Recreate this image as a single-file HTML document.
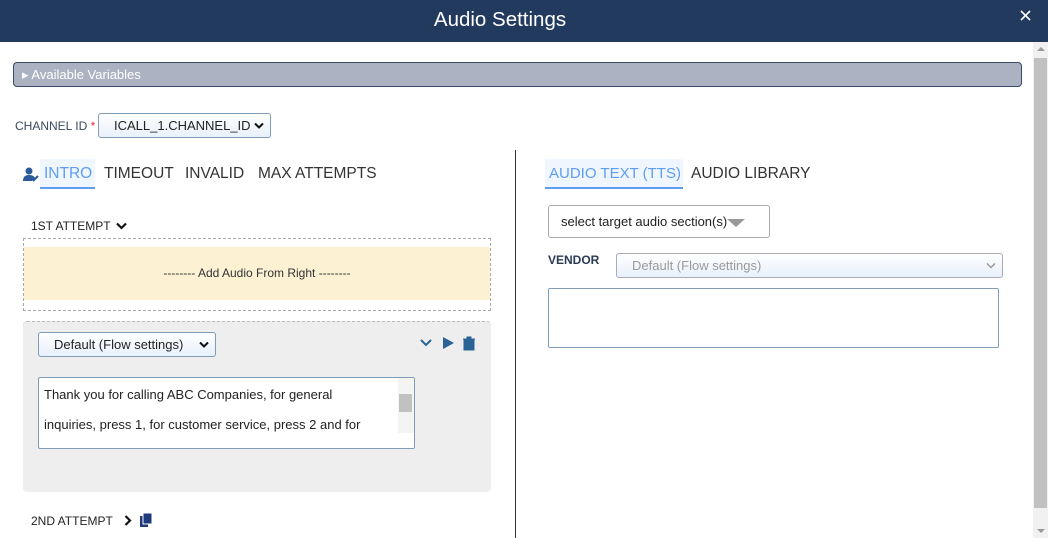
<!DOCTYPE html><html><head><style>
*{box-sizing:border-box}body{margin:0;width:1048px;height:538px;overflow:hidden;font-family:"Liberation Sans",sans-serif;background:#fff;position:relative;color:#333}
.a{position:absolute}
.sel{border:1px solid #7f9db9;border-radius:3px;background:linear-gradient(#fff,#e8f0fb);font-size:13px;color:#222}
.chv{position:absolute;right:6px;top:8px}
</style></head><body>
<div class="a" style="left:0;top:0;width:1048px;height:42px;background:#223a5e"></div>
<div class="a" style="left:433px;top:0;width:134px;color:#fff;font-size:20.5px;text-align:center;line-height:40px">Audio Settings</div>
<svg class="a" style="left:1020px;top:10px" width="11" height="11"><path d="M1 1l9 9M10 1l-9 9" stroke="#fff" stroke-width="1.6"/></svg>
<div class="a" style="left:1033px;top:42px;width:15px;height:496px;background:#f1f1f1"></div>
<div class="a" style="left:1034px;top:58px;width:13px;height:450px;background:#c1c1c1"></div>
<div class="a" style="left:1037px;top:47px;width:0;height:0;border:4px solid transparent;border-bottom-color:#999;border-top:0"></div>
<div class="a" style="left:1037px;top:529px;width:0;height:0;border:4px solid transparent;border-top-color:#999;border-bottom:0"></div>
<div class="a" style="left:13px;top:62px;width:1009px;height:25px;background:#abb2c1;border:1px solid #3a4c6b;border-radius:4px;color:#fff;font-size:13px;line-height:23px;padding-left:8px">▸ Available Variables</div>
<div class="a" style="left:15px;top:119px;font-size:12px;color:#3a4a5e">CHANNEL ID <span style="color:#d33">*</span></div>
<div class="a sel" style="left:98px;top:113px;width:173px;height:25px;line-height:23px;padding-left:15px">ICALL_1.CHANNEL_ID <svg class="chv" width="10" height="8"><path d="M1 1.5l4 4 4-4" stroke="#111" stroke-width="2" fill="none"/></svg></div>
<svg class="a" style="left:22px;top:167px" width="18" height="16"><circle cx="7" cy="4" r="3.5" fill="#2a5a9a"/><path d="M1 14c0-5 3-6 6-6s5 1 6 3l-3 3z" fill="#2a5a9a"/><path d="M11 14l5-5" stroke="#2a5a9a" stroke-width="2"/></svg>
<div class="a" style="left:40px;top:159px;width:55px;height:30px;background:#f0f6fd;border-bottom:2px solid #5d9ef0"></div>
<div class="a" style="left:44px;top:165px;font-size:15.5px;color:#5d9ef0">INTRO</div>
<div class="a" style="left:104px;top:165px;font-size:15.5px;color:#333">TIMEOUT</div>
<div class="a" style="left:185px;top:165px;font-size:15.5px;color:#333">INVALID</div>
<div class="a" style="left:258px;top:165px;font-size:15.5px;color:#333">MAX ATTEMPTS</div>
<div class="a" style="left:31px;top:219px;font-size:12px;color:#222">1ST ATTEMPT</div>
<svg class="a" style="left:116px;top:222px" width="11" height="8"><path d="M1 1.5l4.5 4.5 4.5-4.5" stroke="#111" stroke-width="2.2" fill="none"/></svg>
<div class="a" style="left:23px;top:238px;width:468px;height:73px;border:1px dashed #aaa"></div>
<div class="a" style="left:24px;top:247px;width:466px;height:53px;background:#fcf1d3;font-size:12px;text-align:center;line-height:53px;color:#333">-------- Add Audio From Right --------</div>
<div class="a" style="left:23px;top:321px;width:468px;height:171px;background:#eee;border-radius:4px;border-top:1px dashed #bbb"></div>
<div class="a sel" style="left:38px;top:332px;width:178px;height:25px;line-height:23px;padding-left:15px">Default (Flow settings) <svg class="chv" width="10" height="8"><path d="M1 1.5l4 4 4-4" stroke="#111" stroke-width="2" fill="none"/></svg></div>
<svg class="a" style="left:420px;top:335px" width="58" height="16"><path d="M1 5l5 5 5-5" stroke="#2a6496" stroke-width="2" fill="none"/><path d="M23 2l11 6-11 6z" fill="#2a6496"/><path d="M43 4h12M47 4v-2h4v2M44 5h10v10h-10z" fill="#2a6496" stroke="#2a6496"/></svg>
<div class="a" style="left:38px;top:377px;width:377px;height:72px;background:#fff;border:1px solid #7f9db9;border-radius:2px;font-size:13px;line-height:30px;padding:2px 5px;color:#222">Thank you for calling ABC Companies, for general<br>inquiries, press 1, for customer service, press 2 and for</div>
<div class="a" style="left:398px;top:378px;width:16px;height:55px;background:#f4f4f4"></div>
<div class="a" style="left:399px;top:394px;width:13px;height:18px;background:#c1c1c1"></div>
<div class="a" style="left:31px;top:514px;font-size:12px;color:#222">2ND ATTEMPT</div>
<svg class="a" style="left:124px;top:515px" width="8" height="11"><path d="M1.5 1l4.5 4.5-4.5 4.5" stroke="#111" stroke-width="2.2" fill="none"/></svg>
<svg class="a" style="left:139px;top:513px" width="14" height="15"><rect x="1" y="3" width="8" height="11" fill="#1f3a7a"/><rect x="4" y="0" width="9" height="11" fill="#1f3a7a" stroke="#fff" stroke-width="1"/></svg>
<div class="a" style="left:515px;top:150px;width:1px;height:388px;background:#333"></div>
<div class="a" style="left:545px;top:159px;width:138px;height:30px;background:#f0f6fd;border-bottom:2px solid #5d9ef0"></div>
<div class="a" style="left:549px;top:165px;font-size:15px;color:#5d9ef0">AUDIO TEXT (TTS)</div>
<div class="a" style="left:691px;top:165px;font-size:15.5px;color:#333">AUDIO LIBRARY</div>
<div class="a" style="left:548px;top:205px;width:222px;height:33px;border:1px solid #aaa;border-radius:3px;font-size:13px;line-height:31px;padding-left:12px;color:#222">select target audio section(s)<span style="display:inline-block;width:0;height:0;border:9px solid transparent;border-top:8px solid #999;border-bottom:0;vertical-align:middle"></span></div>
<div class="a" style="left:548px;top:253px;font-size:12px;font-weight:bold;color:#2a3b55">VENDOR</div>
<div class="a sel" style="left:616px;top:253px;width:387px;height:25px;line-height:23px;padding-left:15px;color:#999;border-color:#aab">Default (Flow settings)<svg class="chv" width="10" height="8"><path d="M1 1.5l4 4 4-4" stroke="#999" stroke-width="1.5" fill="none"/></svg></div>
<div class="a" style="left:548px;top:288px;width:451px;height:60px;border:1px solid #7f9db9;border-radius:2px"></div>
</body></html>
